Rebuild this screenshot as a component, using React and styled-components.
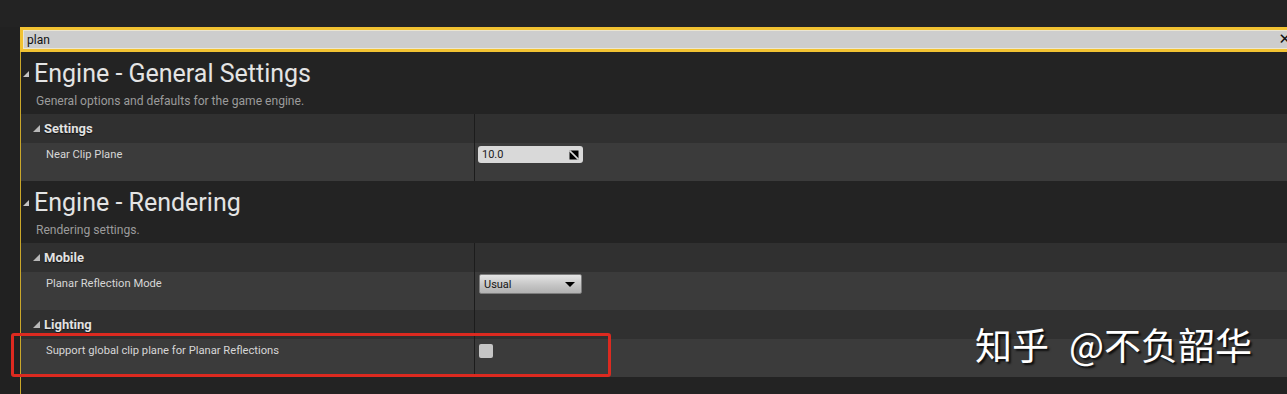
import React from "react";
import styled, { createGlobalStyle } from "styled-components";

const Global = createGlobalStyle`
  html, body { margin: 0; padding: 0; background: #212121; }
  body { font-family: Roboto, "Liberation Sans", sans-serif; overflow: hidden; }
`;

const Page = styled.div`
  position: relative;
  width: 1287px;
  height: 394px;
  overflow: hidden;
  background: #212121;
`;

const TopStrip = styled.div`
  height: 27px;
  background: #232323;
`;

const Panel = styled.div`
  margin-left: 20px;
  margin-right: -20px;
`;

const SearchBox = styled.div`
  height: 25px;
  box-sizing: border-box;
  border: 3px solid #f1c232;
  background: #cdcdcd;
  box-shadow: inset 0 0 0 1px #ece6d2;
  display: flex;
  align-items: center;
  padding-left: 4px;
  padding-right: 13px;
`;

const SearchText = styled.span`
  flex: 1;
  font-size: 12px;
  color: #111;
`;

const Clear = styled.span`
  font-size: 15px;
  line-height: 1;
  color: #111;
  font-family: "DejaVu Sans", sans-serif;
`;

const Body = styled.div`
  border-left: 1px solid #c9a72a;
  background: #232323;
  padding-bottom: 40px;
`;

const SectionHead = styled.div`
  height: 62px;
  box-sizing: border-box;
  padding-top: 7px;
`;

const TitleLine = styled.div`
  display: flex;
  align-items: center;
  padding-left: 2px;
  height: 28px;
`;

const Arrow = styled.span`
  width: 0;
  height: 0;
  border-style: solid;
  border-width: 0 0 ${(p) => p.$size}px ${(p) => p.$size}px;
  border-color: transparent transparent ${(p) => p.$color} transparent;
  margin-right: ${(p) => p.$gap}px;
  margin-top: ${(p) => p.$offset || 0}px;
`;

const Title = styled.span`
  font-size: 25px;
  color: #e4e4e4;
`;

const Desc = styled.div`
  padding-left: 15px;
  margin-top: 7px;
  font-size: 12.1px;
  color: #9b9b9b;
`;

const CategoryRow = styled.div`
  height: 29px;
  background: #303030;
  display: flex;
`;

const CatName = styled.div`
  width: 453px;
  display: flex;
  align-items: center;
  padding-left: 12px;
  box-sizing: border-box;
  font-size: 13px;
  font-weight: 700;
  color: #e2e2e2;
  text-shadow: 0 1px 1px #111;
`;

const Cell = styled.div`
  flex: 1;
  border-left: 1px solid #1c1c1c;
`;

const PropRow = styled.div`
  height: 38px;
  background: #3b3b3b;
  display: flex;
`;

const PropName = styled.div`
  width: 453px;
  box-sizing: border-box;
  padding-left: 25px;
  padding-top: 5px;
  font-size: 11.2px;
  color: #d6d6d6;
  line-height: 13px;
`;

const PropValue = styled.div`
  flex: 1;
  border-left: 1px solid #1c1c1c;
  padding-left: 3px;
  padding-top: ${(p) => p.$top}px;
`;

const NumberBox = styled.div`
  width: 105px;
  height: 17px;
  background: #d9d9d9;
  border-radius: 3px;
  display: flex;
  align-items: center;
  justify-content: space-between;
  padding: 0 4px;
  box-sizing: border-box;
  font-size: 11px;
  color: #1b1b1b;
`;

const Combo = styled.div`
  width: 103px;
  height: 20px;
  margin-left: 1px;
  box-sizing: border-box;
  border: 1px solid #7d7d7d;
  border-radius: 2px;
  background: linear-gradient(#e4e4e4, #c3c3c3 60%, #b2b2b2);
  display: flex;
  align-items: center;
  justify-content: space-between;
  padding: 0 6px 0 4px;
  font-size: 11px;
  color: #151515;
`;

const DownArrow = styled.span`
  width: 0;
  height: 0;
  border-left: 5px solid transparent;
  border-right: 5px solid transparent;
  border-top: 5px solid #000;
`;

const Check = styled.div`
  width: 14px;
  height: 14px;
  margin-left: 1px;
  border-radius: 2px;
  background: #c5c5c5;
`;

const Highlight = styled.div`
  position: absolute;
  left: 11px;
  top: 333px;
  width: 600px;
  height: 44px;
  box-sizing: border-box;
  border: 3px solid #dc2a20;
  border-radius: 3px;
`;

const Watermark = styled.div`
  position: absolute;
  left: 975px;
  top: 317px;
  font-family: "Noto Sans CJK SC", "Noto Sans", sans-serif;
  font-size: 37px;
  color: #ffffff;
  white-space: nowrap;
  text-shadow: 2px 2px 2px rgba(0, 0, 0, 0.8);
`;

const At = styled.span`
  margin-left: 20px;
`;

const SpinIcon = () => (
  <svg width="10" height="10" viewBox="0 0 10 10">
    <rect x="0.5" y="0.5" width="9" height="9" fill="#000" />
    <path d="M0.5 0.5 L9.5 9.5" stroke="#d9d9d9" strokeWidth="1.6" />
  </svg>
);

const Category = ({ name }) => (
  <CategoryRow>
    <CatName>
      <Arrow $size={7} $color="#b8b8b8" $gap={4} />
      {name}
    </CatName>
    <Cell />
  </CategoryRow>
);

const Section = ({ title, desc }) => (
  <SectionHead>
    <TitleLine>
      <Arrow $size={6} $color="#c4c4c4" $gap={5} $offset={2} />
      <Title>{title}</Title>
    </TitleLine>
    <Desc>{desc}</Desc>
  </SectionHead>
);

export default function App() {
  return (
    <Page>
      <Global />
      <TopStrip />
      <Panel>
        <SearchBox>
          <SearchText>plan</SearchText>
          <Clear>✕</Clear>
        </SearchBox>
        <Body>
          <Section
            title="Engine - General Settings"
            desc="General options and defaults for the game engine."
          />
          <Category name="Settings" />
          <PropRow>
            <PropName>Near Clip Plane</PropName>
            <PropValue $top={3}>
              <NumberBox>
                <span>10.0</span>
                <SpinIcon />
              </NumberBox>
            </PropValue>
          </PropRow>
          <Section title="Engine - Rendering" desc="Rendering settings." />
          <Category name="Mobile" />
          <PropRow>
            <PropName>Planar Reflection Mode</PropName>
            <PropValue $top={2}>
              <Combo>
                <span>Usual</span>
                <DownArrow />
              </Combo>
            </PropValue>
          </PropRow>
          <Category name="Lighting" />
          <PropRow>
            <PropName>Support global clip plane for Planar Reflections</PropName>
            <PropValue $top={5}>
              <Check />
            </PropValue>
          </PropRow>
        </Body>
      </Panel>
      <Highlight />
      <Watermark>
        知乎<At>@</At>不负韶华
      </Watermark>
    </Page>
  );
}
